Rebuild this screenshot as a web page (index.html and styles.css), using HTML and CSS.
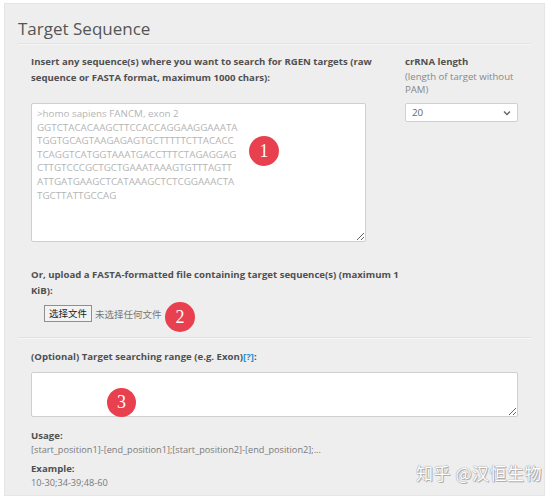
FILE: index.html
```html
<!DOCTYPE html>
<html lang="en">
<head>
<meta charset="utf-8">
<title>Target Sequence</title>
<link rel="stylesheet" href="styles.css">
</head>
<body>
<div class="panel">
  <h2 class="title">Target Sequence</h2>
  <div class="divider"></div>
  <div class="content">
    <div class="row-top">
      <div class="col-main">
        <label class="label label-seq">Insert any sequence(s) where you want to search for RGEN targets (raw sequence or FASTA format, maximum 1000 chars):</label>
        <div class="ta-wrap">
          <textarea class="ta ta-seq" placeholder=">homo sapiens FANCM, exon 2&#10;GGTCTACACAAGCTTCCACCAGGAAGGAAATA&#10;TGGTGCAGTAAGAGAGTGCTTTTTCTTACACC&#10;TCAGGTCATGGTAAATGACCTTTCTAGAGGAG&#10;CTTGTCCCGCTGCTGAAATAAAGTGTTTAGTT&#10;ATTGATGAAGCTCATAAAGCTCTCGGAAACTA&#10;TGCTTATTGCCAG"></textarea>
          <span class="badge badge-1">1</span>
        </div>
      </div>
      <div class="col-side">
        <div class="label">crRNA length</div>
        <div class="hint">(length of target without PAM)</div>
        <div class="select">
          <span>20</span>
          <svg class="chev" width="8" height="6" viewBox="0 0 8 6"><path d="M1 1.5 L4 4.5 L7 1.5" fill="none" stroke="#666" stroke-width="1.4"/></svg>
        </div>
      </div>
    </div>

    <div class="label label-upload">Or, upload a FASTA-formatted file containing target sequence(s) (maximum 1 KiB):</div>
    <div class="file-row">
      <span class="file-btn">选择文件</span>
      <span class="file-none">未选择任何文件</span>
      <span class="badge badge-2">2</span>
    </div>
  </div>
  <div class="divider divider-2"></div>
  <div class="content">
    <div class="label label-range">(Optional) Target searching range (e.g. Exon)<a class="help">[?]</a>:</div>
    <div class="ta-wrap">
      <textarea class="ta ta-range"></textarea>
      <span class="badge badge-3">3</span>
    </div>
    <div class="usage">
      <div class="label">Usage:</div>
      <div class="mono">[start_position1]-[end_position1];[start_position2]-[end_position2];...</div>
    </div>
    <div class="usage usage-ex">
      <div class="label">Example:</div>
      <div class="mono">10-30;34-39;48-60</div>
    </div>
  </div>
  <div class="watermark">知乎 @汉恒生物</div>
</div>
</body>
</html>
```

FILE: styles.css
```css
html, body {
  margin: 0;
  padding: 0;
  background: #ffffff;
}
body {
  font-family: "Open Sans", "Noto Sans CJK SC", sans-serif;
  width: 554px;
  height: 500px;
  overflow: hidden;
}
.panel {
  position: relative;
  margin: 3px 0 0 4px;
  width: 541px;
  height: 493px;
  box-sizing: border-box;
  background: #eeeeee;
  border: 1px solid #e6e6e6;
  padding: 13px 13px 0 13px;
}
.title {
  margin: 0;
  font-size: 17px;
  font-weight: 400;
  line-height: 24px;
  color: #555555;
}
.divider {
  margin-top: 2px;
  height: 0;
  border-top: 1px solid #e2e2e2;
  border-bottom: 1px solid #f6f6f6;
}
.divider-2 {
  margin-top: 15px;
}
.content {
  padding: 0 13px;
}
.row-top {
  display: flex;
  gap: 39px;
  margin-top: 9px;
}
.col-main {
  width: 335px;
}
.col-side {
  width: 113px;
}
.label {
  display: block;
  font-size: 9.6px;
  font-weight: 700;
  line-height: 16px;
  color: #505050;
}
.label-seq {
  width: 352px;
}
.hint {
  font-size: 9.6px;
  line-height: 13px;
  color: #888888;
}
.ta-wrap {
  position: relative;
}
.ta {
  display: block;
  box-sizing: border-box;
  width: 100%;
  margin: 0;
  background: #ffffff;
  border: 1px solid #cfcfcf;
  border-radius: 2px;
  font-family: "Open Sans", sans-serif;
  font-size: 9.8px;
  line-height: 13.6px;
  padding: 3px 5px;
  color: #555;
  resize: vertical;
  outline: none;
}
.ta::placeholder {
  color: #b5b5b5;
}
.ta-seq {
  margin-top: 17px;
  height: 139px;
}
.ta-range {
  margin-top: 7px;
  height: 45px;
}
.badge {
  position: absolute;
  width: 30px;
  height: 30px;
  border-radius: 50%;
  background: #e8404f;
  color: #ffffff;
  font-family: "Liberation Serif", serif;
  font-size: 18px;
  line-height: 30px;
  text-align: center;
}
.badge-1 {
  left: 218px;
  top: 33px;
}
.badge-3 {
  left: 76px;
  top: 16px;
  width: 29px;
  height: 29px;
  line-height: 29px;
}
.select {
  margin-top: 7px;
  height: 19px;
  box-sizing: border-box;
  background: #ffffff;
  border: 1px solid #d0d0d0;
  border-radius: 2px;
  display: flex;
  align-items: center;
  justify-content: space-between;
  padding: 0 6px 0 6px;
  font-size: 9.8px;
  color: #666666;
}
.label-upload {
  margin-top: 25px;
  width: 370px;
}
.file-row {
  position: relative;
  display: flex;
  align-items: center;
  margin: 6px 0 0 13px;
  height: 17px;
}
.file-btn {
  box-sizing: border-box;
  height: 17px;
  padding: 0 4px;
  border: 1px solid #8f8f8f;
  background: #f3f3f3;
  font-family: "Noto Sans CJK SC", sans-serif;
  font-size: 9.5px;
  line-height: 15px;
  color: #222222;
}
.file-none {
  margin-left: 3px;
  font-family: "Noto Sans CJK SC", sans-serif;
  font-size: 9.5px;
  color: #777777;
}
.badge-2 {
  left: 121px;
  top: -3px;
}
.label-range {
  margin-top: 10px;
}
.help {
  color: #2a8fd0;
}
.usage {
  margin-top: 12px;
}
.usage-ex {
  margin-top: 5px;
}
.usage .label {
  line-height: 14px;
}
.mono {
  font-size: 9.2px;
  line-height: 14px;
  color: #7a7a7a;
}
.watermark {
  position: absolute;
  right: 2px;
  bottom: 10px;
  font-family: "Noto Sans CJK SC", sans-serif;
  font-size: 17px;
  color: #ffffff;
  letter-spacing: 0.5px;
  text-shadow: 0 0 1px #9a9a9a, 0 0 1px #9a9a9a, 1px 1px 0 #b5b5b5;
}
```
